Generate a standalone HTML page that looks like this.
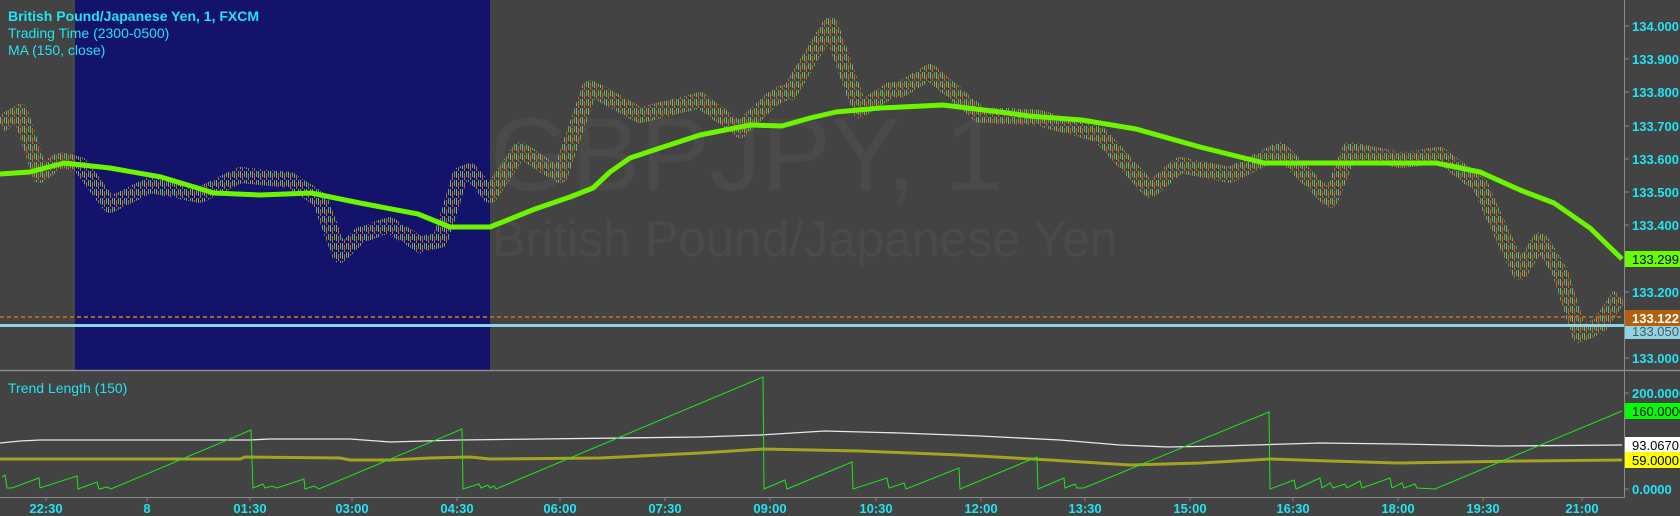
<!DOCTYPE html>
<html><head><meta charset="utf-8"><style>
html,body{margin:0;padding:0;background:#434343;width:1680px;height:516px;overflow:hidden}
svg{display:block}
text{font-family:"Liberation Sans",sans-serif}
</style></head><body>
<svg width="1680" height="516" xmlns="http://www.w3.org/2000/svg">
<defs>
<pattern id="bp" x="0" y="0" width="6" height="9" patternUnits="userSpaceOnUse">
<rect x="0" y="0" width="1" height="7" fill="#9a9a9a"/>
<rect x="2" y="2" width="1" height="7" fill="#c8680a"/>
<rect x="4" y="0" width="1" height="6" fill="#3fbf3f"/>
</pattern>
</defs>
<rect x="0" y="0" width="1680" height="516" fill="#434343"/>
<rect x="75" y="0" width="415" height="370" fill="#13136b"/>
<text x="490" y="190" font-size="104" fill="#4a4a4a">GBPJPY, 1</text>
<text x="492" y="256" font-size="50" fill="#4a4a4a">British Pound/Japanese Yen</text>
<polyline fill="none" stroke="url(#bp)" stroke-width="16" stroke-linejoin="round" points="0,125 10,118 20,112 30,143 40,175 50,167 60,160 70,162 80,165 90,178 100,192 110,205 120,200 130,195 140,190 150,185 160,187 170,189 180,191 190,193 200,195 210,190 220,185 230,180 240,175 250,176 260,177 270,178 280,179 290,180 300,187 310,193 320,200 330,227 340,255 350,245 360,235 370,232 380,228 390,225 400,232 410,238 420,245 430,242 440,240 450,210 460,175 470,171 480,183 490,195 500,180 510,165 520,150 530,156 540,163 550,169 560,175 570,146 580,117 590,88 600,93 610,99 620,104 630,110 640,115 650,113 660,110 670,108 680,105 690,103 700,100 710,108 720,115 730,123 740,130 750,120 760,111 770,101 780,94 790,92 800,75 810,58 820,42 830,25 840,53 850,82 860,110 870,103 880,97 890,90 900,90 910,84 920,78 930,72 940,81 950,89 960,98 970,106 980,115 990,115 1000,116 1010,116 1020,117 1030,117 1040,118 1050,121 1060,124 1070,126 1080,129 1090,132 1100,135 1110,146 1120,157 1130,168 1140,179 1150,190 1160,182 1170,173 1180,165 1190,167 1200,169 1210,171 1220,173 1230,175 1240,170 1250,165 1260,160 1270,155 1280,150 1290,160 1300,170 1310,180 1320,190 1330,200 1340,175 1350,150 1360,152 1370,154 1380,156 1390,158 1400,160 1410,159 1420,158 1430,156 1440,155 1450,163 1460,170 1470,178 1480,185 1490,208 1500,230 1510,251 1520,272 1530,256 1540,240 1550,256 1560,272 1570,304 1580,335 1590,330 1600,325 1610,310 1620,295"/>
<line x1="0" y1="317" x2="1624" y2="317" stroke="#b5631a" stroke-width="2" stroke-dasharray="4,3"/>
<line x1="0" y1="325.5" x2="1624" y2="325.5" stroke="#8fd3e6" stroke-width="3"/>
<polyline fill="none" stroke="#6cf500" stroke-width="5" stroke-linejoin="round" points="0,174 30,172 64,163 110,168 161,177 214,193 260,195 311,193 360,203 418,214 450,227 490,227 535,209 570,197 593,188 610,172 630,158 660,148 700,135 750,125 782,126 810,118 836,112 880,108 943,105 1000,112 1029,116 1082,120 1136,129 1200,147 1264,163 1350,163 1436,163 1480,172 1520,190 1554,203 1590,228 1622,259"/>
<line x1="0" y1="370.5" x2="1680" y2="370.5" stroke="#8a8a8a" stroke-width="1.5"/>
<line x1="1624.5" y1="0" x2="1624.5" y2="497" stroke="#8a8a8a" stroke-width="1"/>
<line x1="0" y1="497.5" x2="1625" y2="497.5" stroke="#8a8a8a" stroke-width="1"/>
<polyline fill="none" stroke="#e8e8e8" stroke-width="1.3" points="0,443 20,441 40,440 250,440 270,439 350,439 390,442 460,440 540,439 700,437 760,435 825,431 900,433 980,436 1060,440 1120,445 1168,447 1220,446 1320,443 1400,444 1500,446 1622,445"/>
<polyline fill="none" stroke="#a3a321" stroke-width="3" points="0,459 240,459 245,457 340,458 350,460 390,460 430,458 470,457 490,459 600,458 700,453 763,449 860,451 960,455 1050,460 1130,465 1200,463 1270,459 1330,461 1400,463 1520,461 1622,460"/>
<polyline fill="none" stroke="#1ee61e" stroke-width="1" points="2,477 5,475 7,488 12,488 39,478 40,488 77,476 78,489 97,482 99,489 107,487 111,489 251,430 253,488 263,484 265,488 272,486 277,488 283,486 304,479 305,489 314,486 319,489 462,429 463,489 479,484 481,488 488,485 490,488 494,486 496,489 763,377 764,489 785,480 787,489 852,462 853,489 887,478 889,488 904,483 906,489 959,468 960,489 1037,457 1038,489 1064,478 1065,488 1075,484 1077,488 1084,488 1269,412 1270,489 1294,480 1296,489 1320,478 1322,488 1330,483 1333,488 1345,484 1347,488 1360,481 1362,488 1390,478 1392,488 1402,483 1404,488 1415,484 1417,488 1435,489 1622,411"/>
<g font-size="13" font-weight="bold" fill="#22e4f2">
<text x="1632" y="31">134.000</text><text x="1632" y="64">133.900</text><text x="1632" y="97">133.800</text>
<text x="1632" y="131">133.700</text><text x="1632" y="164">133.600</text><text x="1632" y="197">133.500</text>
<text x="1632" y="230">133.400</text><text x="1632" y="297">133.200</text><text x="1632" y="363">133.000</text>
<text x="1632" y="398">200.0000</text><text x="1632" y="494">0.0000</text>
</g>
<g stroke="#8a8a8a"><line x1="1625" y1="26" x2="1629" y2="26"/><line x1="1625" y1="59" x2="1629" y2="59"/><line x1="1625" y1="92" x2="1629" y2="92"/><line x1="1625" y1="126" x2="1629" y2="126"/><line x1="1625" y1="159" x2="1629" y2="159"/><line x1="1625" y1="192" x2="1629" y2="192"/><line x1="1625" y1="225" x2="1629" y2="225"/><line x1="1625" y1="292" x2="1629" y2="292"/><line x1="1625" y1="358" x2="1629" y2="358"/><line x1="1625" y1="393" x2="1629" y2="393"/><line x1="1625" y1="489" x2="1629" y2="489"/></g>
<rect x="1625" y="323" width="55" height="16" fill="#8fd3e6"/><text x="1632" y="336" font-size="13" fill="#555">133.050</text>
<rect x="1625" y="310" width="55" height="16" fill="#b5600c"/><text x="1632" y="323" font-size="13" font-weight="bold" fill="#fff">133.122</text>
<rect x="1625" y="251" width="55" height="16" fill="#66ff00"/><text x="1632" y="264" font-size="13" fill="#000">133.299</text>
<rect x="1625" y="403" width="55" height="16" fill="#00ff00"/><text x="1632" y="416" font-size="13" fill="#000">160.0000</text>
<rect x="1625" y="437" width="55" height="16" fill="#ffffff"/><text x="1632" y="450" font-size="13" fill="#000">93.0670</text>
<rect x="1625" y="452" width="55" height="16" fill="#ffff00"/><text x="1632" y="465" font-size="13" fill="#000">59.0000</text>
<g stroke="#8a8a8a">
<line x1="46" y1="497" x2="46" y2="501"/><line x1="147" y1="497" x2="147" y2="501"/><line x1="250" y1="497" x2="250" y2="501"/><line x1="352" y1="497" x2="352" y2="501"/><line x1="457" y1="497" x2="457" y2="501"/><line x1="560" y1="497" x2="560" y2="501"/><line x1="665" y1="497" x2="665" y2="501"/><line x1="770" y1="497" x2="770" y2="501"/><line x1="876" y1="497" x2="876" y2="501"/><line x1="981" y1="497" x2="981" y2="501"/><line x1="1085" y1="497" x2="1085" y2="501"/><line x1="1190" y1="497" x2="1190" y2="501"/><line x1="1293" y1="497" x2="1293" y2="501"/><line x1="1398" y1="497" x2="1398" y2="501"/><line x1="1483" y1="497" x2="1483" y2="501"/><line x1="1582" y1="497" x2="1582" y2="501"/>
</g>
<g font-size="13" font-weight="bold" fill="#22e4f2" text-anchor="middle">
<text x="46" y="513">22:30</text><text x="147" y="513">8</text><text x="250" y="513">01:30</text><text x="352" y="513">03:00</text><text x="457" y="513">04:30</text><text x="560" y="513">06:00</text><text x="665" y="513">07:30</text><text x="770" y="513">09:00</text><text x="876" y="513">10:30</text><text x="981" y="513">12:00</text><text x="1085" y="513">13:30</text><text x="1190" y="513">15:00</text><text x="1293" y="513">16:30</text><text x="1398" y="513">18:00</text><text x="1483" y="513">19:30</text><text x="1582" y="513">21:00</text>
</g>
<g font-size="14" fill="#22e4f2">
<text x="8" y="21" font-weight="bold">British Pound/Japanese Yen, 1, FXCM</text>
<text x="8" y="38">Trading Time (2300-0500)</text>
<text x="8" y="55">MA (150, close)</text>
<text x="8" y="393">Trend Length (150)</text>
</g>
</svg>
</body></html>
